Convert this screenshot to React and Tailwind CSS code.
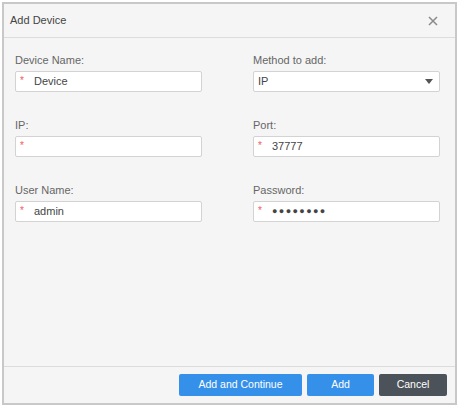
import React from 'react';

const font = { fontFamily: '"Liberation Sans", Arial, sans-serif' };

function Field({ label, value, required, select, password }) {
  return (
    <div className="flex flex-col">
      <div className="h-[20px] text-[11px] leading-[20px] text-[#666]">{label}</div>
      <div className="mt-[1px] h-[21px] w-[187px] bg-white border border-[#d3d3d3] rounded-[2px] flex items-center text-[11px] text-[#444]">
        {required && <span className="w-[18px] pl-[4px] text-[#f25a5a] text-[10px] leading-none -mt-[1px]">*</span>}
        {select && <span className="pl-[4px]">{value}</span>}
        {!select && !password && <span>{value}</span>}
        {password && <span className="text-[9px] tracking-[1.4px] text-[#444]">●●●●●●●●</span>}
        {select && (
          <svg className="ml-auto mr-[6px]" width="8" height="5" viewBox="0 0 8 5">
            <path d="M0 0h8L4 5z" fill="#555" />
          </svg>
        )}
      </div>
    </div>
  );
}

export default function App() {
  return (
    <div className="w-[459px] h-[410px] bg-white pt-[2px] pl-[2px]" style={font}>
      <div className="w-[455px] h-[403px] border-2 border-[#c8c8c8] bg-[#f5f5f5] flex flex-col">
        <div className="h-[34px] border-b-[1.5px] border-[#dcdcdc] flex items-center justify-between pl-[6px] pr-[17px]">
          <span className="text-[11px] text-[#444]">Add Device</span>
          <svg width="10" height="10" viewBox="0 0 10 10">
            <path d="M1 1l8 8M9 1l-8 8" stroke="#8a8a8a" strokeWidth="1.5" />
          </svg>
        </div>
        <div className="flex-1 grid grid-cols-[238px_187px] gap-y-[23px] pl-[11px] pt-[12px] content-start">
          <Field label="Device Name:" value="Device" required />
          <Field label="Method to add:" value="IP" select />
          <Field label="IP:" value="" required />
          <Field label="Port:" value="37777" required />
          <Field label="User Name:" value="admin" required />
          <Field label="Password:" required password />
        </div>
        <div className="h-[37px] border-t-[1.5px] border-[#dcdcdc] flex items-start justify-end gap-[5px] pt-[7px] pr-[8px]">
          <button className="w-[123px] h-[22px] bg-[#3590ea] text-white text-[10.5px] rounded-[2px]">Add and Continue</button>
          <button className="w-[67px] h-[22px] bg-[#3590ea] text-white text-[10.5px] rounded-[2px]">Add</button>
          <button className="w-[68px] h-[22px] bg-[#4c5259] text-white text-[10.5px] rounded-[2px]">Cancel</button>
        </div>
      </div>
    </div>
  );
}
